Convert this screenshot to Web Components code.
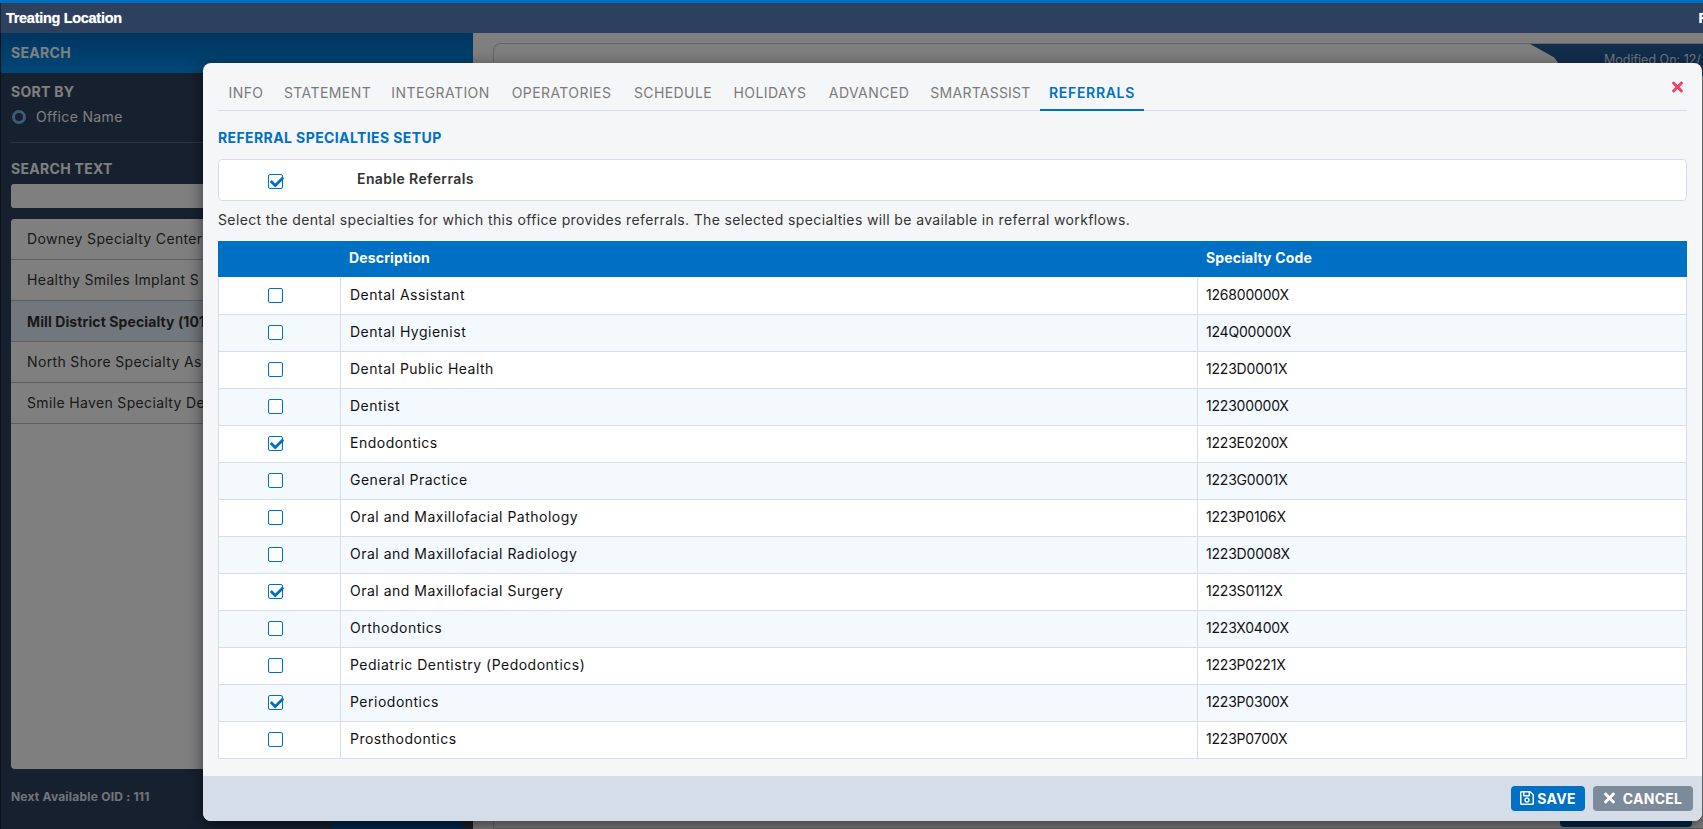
<!DOCTYPE html>
<html lang="en">
<head>
<meta charset="utf-8">
<title>Treating Location</title>
<style>
html,body{margin:0;padding:0;background:#2c405e;}
body{font-family:Inter,"Noto Sans","Liberation Sans",sans-serif;}
</style>
</head>
<body>
<app-shell>
  <top-bar slot="top" title-text="Treating Location" trail="F"></top-bar>
  <side-bar slot="side">
    <office-item>Downey Specialty Center</office-item>
    <office-item>Healthy Smiles Implant S</office-item>
    <office-item selected>Mill District Specialty (101)</office-item>
    <office-item>North Shore Specialty As</office-item>
    <office-item>Smile Haven Specialty De</office-item>
  </side-bar>
  <work-area slot="main"></work-area>
  <setup-modal slot="modal">
    <modal-tabs slot="tabs"></modal-tabs>
    <section-title slot="body">REFERRAL SPECIALTIES SETUP</section-title>
    <enable-box slot="body">Enable Referrals</enable-box>
    <help-text slot="body">Select the dental specialties for which this office provides referrals. The selected specialties will be available in referral workflows.</help-text>
    <spec-table slot="body">
      <spec-row code="126800000X">Dental Assistant</spec-row>
      <spec-row code="124Q00000X">Dental Hygienist</spec-row>
      <spec-row code="1223D0001X">Dental Public Health</spec-row>
      <spec-row code="122300000X">Dentist</spec-row>
      <spec-row code="1223E0200X" checked>Endodontics</spec-row>
      <spec-row code="1223G0001X">General Practice</spec-row>
      <spec-row code="1223P0106X">Oral and Maxillofacial Pathology</spec-row>
      <spec-row code="1223D0008X">Oral and Maxillofacial Radiology</spec-row>
      <spec-row code="1223S0112X" checked>Oral and Maxillofacial Surgery</spec-row>
      <spec-row code="1223X0400X">Orthodontics</spec-row>
      <spec-row code="1223P0221X">Pediatric Dentistry (Pedodontics)</spec-row>
      <spec-row code="1223P0300X" checked>Periodontics</spec-row>
      <spec-row code="1223P0700X">Prosthodontics</spec-row>
    </spec-table>
    <action-button slot="foot" kind="save">SAVE</action-button>
    <action-button slot="foot" kind="cancel">CANCEL</action-button>
  </setup-modal>
</app-shell>
<script>
const FONT = 'Inter,"Noto Sans","Liberation Sans",sans-serif';
const ICONS = {
  times: ['0 0 352 512','M242.72 256l100.07-100.07c12.28-12.28 12.28-32.19 0-44.48l-22.24-22.24c-12.28-12.28-32.19-12.28-44.48 0L176 189.28 75.93 89.21c-12.28-12.28-32.19-12.28-44.48 0L9.21 111.45c-12.28 12.28-12.28 32.19 0 44.48L109.28 256 9.21 356.07c-12.28 12.28-12.28 32.19 0 44.48l22.24 22.24c12.28 12.28 32.2 12.28 44.48 0L176 322.72l100.07 100.07c12.28 12.28 32.2 12.28 44.48 0l22.24-22.24c12.28-12.28 12.28-32.19 0-44.48L242.72 256z'],
  save: ['0 0 448 512','M433.941 129.941l-83.882-83.882A48 48 0 0 0 316.118 32H48C21.49 32 0 53.49 0 80v352c0 26.51 21.49 48 48 48h352c26.51 0 48-21.49 48-48V163.882a48 48 0 0 0-14.059-33.941zM272 80v80H144V80h128zm122 352H54a6 6 0 0 1-6-6V86a6 6 0 0 1 6-6h42v104c0 13.255 10.745 24 24 24h176c13.255 0 24-10.745 24-24V83.882l78.243 78.243a6 6 0 0 1 1.757 4.243V426a6 6 0 0 1-6 6zM224 232c-48.523 0-88 39.477-88 88s39.477 88 88 88 88-39.477 88-88-39.477-88-88-88zm0 128c-22.056 0-40-17.944-40-40s17.944-40 40-40 40 17.944 40 40-17.944 40-40 40z'],
  check: ['0 0 512 512','M173.898 439.404l-166.4-166.4c-9.997-9.997-9.997-26.206 0-36.204l36.203-36.204c9.997-9.998 26.207-9.998 36.204 0L192 312.69 432.095 72.596c9.997-9.997 26.207-9.997 36.204 0l36.203 36.204c9.997 9.997 9.997 26.206 0 36.204l-294.4 294.401c-9.998 9.997-26.207 9.997-36.204-.001z']
};
const icon = (n,w,h,c) => `<svg width="${w}" height="${h}" viewBox="${ICONS[n][0]}" fill="${c}" aria-hidden="true"><path d="${ICONS[n][1]}"/></svg>`;

class Base extends HTMLElement {
  connectedCallback(){
    if(!this.shadowRoot){ this.attachShadow({mode:'open'}).innerHTML = this.render(); }
  }
}

customElements.define('app-shell', class extends Base {
  render(){ return `<style>
    :host{display:block;position:relative;width:1703px;height:829px;overflow:hidden;font-family:${FONT};}
    .bluebar{height:3px;background:#0070c4;}
    .main{display:flex;height:796px;position:relative;}
    .veil{position:absolute;inset:0;background:rgba(0,0,0,.5);}
    .modal{position:absolute;left:203px;top:30px;}
  </style>
  <div class="bluebar"></div>
  <slot name="top"></slot>
  <div class="main">
    <slot name="side"></slot>
    <slot name="main"></slot>
    <div class="veil"></div>
    <div class="modal"><slot name="modal"></slot></div>
  </div>`; }
});

customElements.define('top-bar', class extends Base {
  render(){ return `<style>
    :host{display:flex;height:30px;align-items:center;justify-content:space-between;background:#2d415f;color:#fff;
      font:700 14.5px/30px "Liberation Sans",Arial,sans-serif;letter-spacing:-.3px;padding-left:6px;box-shadow:inset 1px 0 #1b2636;overflow:hidden;text-shadow:0 0 1px rgba(255,255,255,.6);}
    span:last-child{margin-right:-4px;}
  </style><span>${this.getAttribute('title-text')}</span><span>${this.getAttribute('trail')}</span>`; }
});

customElements.define('side-bar', class extends Base {
  render(){ return `<style>
    :host{display:flex;flex-direction:column;width:473px;flex:none;background:#2c405e;color:#fff;box-sizing:border-box;border-left:1px solid #1b2636;}
    .band{height:40px;background:linear-gradient(#006abf,#0090f0);display:flex;align-items:center;padding:0 0 2px 10px;box-sizing:border-box;font-weight:700;font-size:14px;letter-spacing:.3px;flex:none;}
    .body{padding:0 8px 0 10px;flex:1;display:flex;flex-direction:column;}
    .label{font-weight:700;font-size:14px;letter-spacing:.3px;line-height:16px;}
    .sort{margin-top:11px;}
    .radio{display:flex;align-items:center;gap:10px;font-size:14px;letter-spacing:.35px;margin-top:7px;height:18px;}
    .dot{width:8px;height:8px;border-radius:50%;border:3px solid #7ab8f0;background:#2c405e;box-sizing:content-box;margin:1px 0 0 1px;}
    hr{border:0;border-top:1px solid #5c6a80;margin:17px 0 18px;}
    .input{height:24px;background:#fff;border-radius:3px;margin-top:7px;flex:none;}
    .list{margin-top:11px;background:#fff;border-radius:4px;height:550px;overflow:hidden;flex:none;}
    .oid{margin-top:20px;font-size:12px;font-weight:700;color:#e2e8f0;letter-spacing:.22px;line-height:16px;}
    .add{position:absolute;left:332px;bottom:0;width:131px;height:22px;background:#00509a;border-radius:4px 4px 0 0;color:#fff;font-size:13px;font-weight:700;letter-spacing:.5px;text-align:center;line-height:12px;}
  </style>
  <div class="band">SEARCH</div>
  <div class="body">
    <div class="label sort">SORT BY</div>
    <div class="radio"><span class="dot"></span>Office Name</div>
    <hr>
    <div class="label">SEARCH TEXT</div>
    <div class="input"></div>
    <div class="list"><slot></slot></div>
    <div class="oid">Next Available OID : 111</div>
  </div>
  <div class="add">+ ADD OFFICE</div>`; }
});

customElements.define('office-item', class extends Base {
  render(){ const s=this.hasAttribute('selected'); return `<style>
    :host{display:flex;align-items:center;height:41px;box-sizing:border-box;border-bottom:1px solid #bfbfbf;padding:${s?'1px 0 0':'0 0 1px'} 16px;color:#333;background:${s?'#e4eefa':'#fff'};
      font-size:14px;letter-spacing:${s?.1:.35}px;font-weight:${s?700:400};white-space:nowrap;}
  </style><slot></slot>`; }
});

customElements.define('work-area', class extends Base {
  render(){ return `<style>
    :host{display:block;flex:1;background:#fff;position:relative;padding:10px 0 0 20px;box-sizing:border-box;}
    .card{height:100%;border:1px solid #ccc;border-right:0;border-radius:8px 0 0 0;box-sizing:border-box;position:relative;}
    .tag{position:absolute;right:0;top:0;width:173px;height:32px;background:#275a9a;clip-path:polygon(0 0,100% 0,100% 100%,22% 100%,14% 42%);color:#dfeaf5;font-size:12.5px;white-space:nowrap;padding:8px 0 0 74px;box-sizing:border-box;}
    .btn{position:absolute;right:11px;bottom:2px;width:132px;height:12px;background:#00509a;border-radius:0 0 4px 4px;}
  </style><div class="card"><div class="tag">Modified On: 12/</div></div><div class="btn"></div>`; }
});

customElements.define('setup-modal', class extends Base {
  render(){ return `<style>
    :host{display:flex;flex-direction:column;width:1499px;height:758px;background:#f5f6f8;border-radius:8px;box-shadow:0 4px 16px rgba(0,0,0,.55);overflow:hidden;}
    .top{padding:0 15px;position:relative;flex:none;}
    .close{position:absolute;right:19px;top:16px;line-height:0;}
    .body{flex:1;padding:0 15px;}
    .foot{height:45px;flex:none;background:#d5dee8;display:flex;justify-content:flex-end;align-items:center;gap:8px;padding-right:9px;}
  </style>
  <div class="top"><slot name="tabs"></slot><span class="close">${icon('times',11,16,'#f0406a')}</span></div>
  <div class="body"><slot name="body"></slot></div>
  <div class="foot"><slot name="foot"></slot></div>`; }
});

customElements.define('modal-tabs', class extends Base {
  render(){
    const t=[['INFO',56],['STATEMENT',107],['INTEGRATION',119],['OPERATORIES',123],['SCHEDULE',100],['HOLIDAYS',94],['ADVANCED',104],['SMARTASSIST',119],['REFERRALS',104]];
    return `<style>
      :host{display:flex;height:48px;box-sizing:border-box;border-bottom:1px solid #d9dcea;}
      div{display:flex;align-items:center;justify-content:center;height:48px;box-sizing:border-box;padding-top:13px;border-bottom:2px solid transparent;color:#7b7b7b;font-size:14px;letter-spacing:.42px;white-space:nowrap;}
      div.on{color:#0070c4;font-weight:600;border-bottom-color:#0070c4;letter-spacing:.7px;}
      div.sa{letter-spacing:.25px;}
    </style>${t.map((x,i)=>`<div class="${i==8?'on':i==7?'sa':''}" style="width:${x[1]}px">${x[0]}</div>`).join('')}`;
  }
});

customElements.define('section-title', class extends Base {
  render(){ return `<style>
    :host{display:block;color:#0070c4;font-weight:700;font-size:14px;letter-spacing:.4px;line-height:16px;padding-top:19px;height:48px;box-sizing:border-box;}
  </style><slot></slot>`; }
});

customElements.define('spec-check', class extends Base {
  render(){ const c=this.hasAttribute('checked'); return `<style>
    :host{display:block;width:15px;height:15px;box-sizing:border-box;border:1px solid #0070c4;border-radius:2px;background:#fff;position:relative;}
    svg{position:absolute;left:1px;top:0;}
  </style>${c?icon('check',14,14,'#0070c4'):''}`; }
});

customElements.define('enable-box', class extends Base {
  render(){ return `<style>
    :host{display:flex;align-items:center;height:42px;box-sizing:border-box;background:#fff;border:1px solid #d9dcea;border-radius:4px;color:#333;font-weight:600;font-size:14px;letter-spacing:.4px;}
    spec-check{margin:3px 0 0 49px;}
    span{margin-left:74px;margin-top:-3px;}
  </style><spec-check checked></spec-check><span><slot></slot></span>`; }
});

customElements.define('help-text', class extends Base {
  render(){ return `<style>
    :host{display:block;color:#333;font-size:14px;letter-spacing:.37px;line-height:38px;height:40px;white-space:nowrap;}
  </style><slot></slot>`; }
});

customElements.define('spec-table', class extends Base {
  render(){ return `<style>
    :host{display:block;}
    .head{display:grid;grid-template-columns:122px 857px 1fr;height:36px;box-sizing:border-box;padding-bottom:4px;align-items:center;background:#0070c4;color:#fff;font-weight:700;font-size:14px;letter-spacing:.15px;}
    .head span:nth-child(2){padding-left:9px;}
    .head span:nth-child(3){padding-left:9px;}
    .rows{padding-top:1px;background:#fff;}
    ::slotted(spec-row:nth-child(even)){background:#f4f9fe;}
  </style>
  <div class="head"><span></span><span>Description</span><span>Specialty Code</span></div>
  <div class="rows"><slot></slot></div>`; }
});

customElements.define('spec-row', class extends Base {
  render(){ return `<style>
    :host{display:grid;grid-template-columns:122px 857px 1fr;height:37px;box-sizing:border-box;background:#fff;border:1px solid #d9dcea;border-top:0;color:#111;font-size:14px;letter-spacing:.5px;}
    .a,.b,.c{display:flex;align-items:center;box-sizing:border-box;}
    .a{border-right:1px solid #d9dcea;padding:0 0 1px 49px;}
    .b{border-right:1px solid #d9dcea;padding:0 0 3px 9px;}
    .c{padding:0 0 3px 8px;letter-spacing:-.2px;}
  </style>
  <div class="a"><spec-check ${this.hasAttribute('checked')?'checked':''}></spec-check></div>
  <div class="b"><slot></slot></div>
  <div class="c">${this.getAttribute('code')}</div>`; }
});

customElements.define('action-button', class extends Base {
  render(){ const s=this.getAttribute('kind')==='save'; return `<style>
    :host{display:flex;align-items:center;justify-content:center;gap:${s?3:8}px;height:25px;box-sizing:border-box;padding-bottom:1px;width:${s?74:100}px;border-radius:4px;background:${s?'#0070c4':'#7c8a99'};color:#fff;font-weight:700;font-size:14px;letter-spacing:.3px;}
    svg{display:block;}
  </style>${s?icon('save',14,16,'#fff'):icon('times',11,16,'#fff')}<slot></slot>`; }
});
</script>
</body>
</html>
